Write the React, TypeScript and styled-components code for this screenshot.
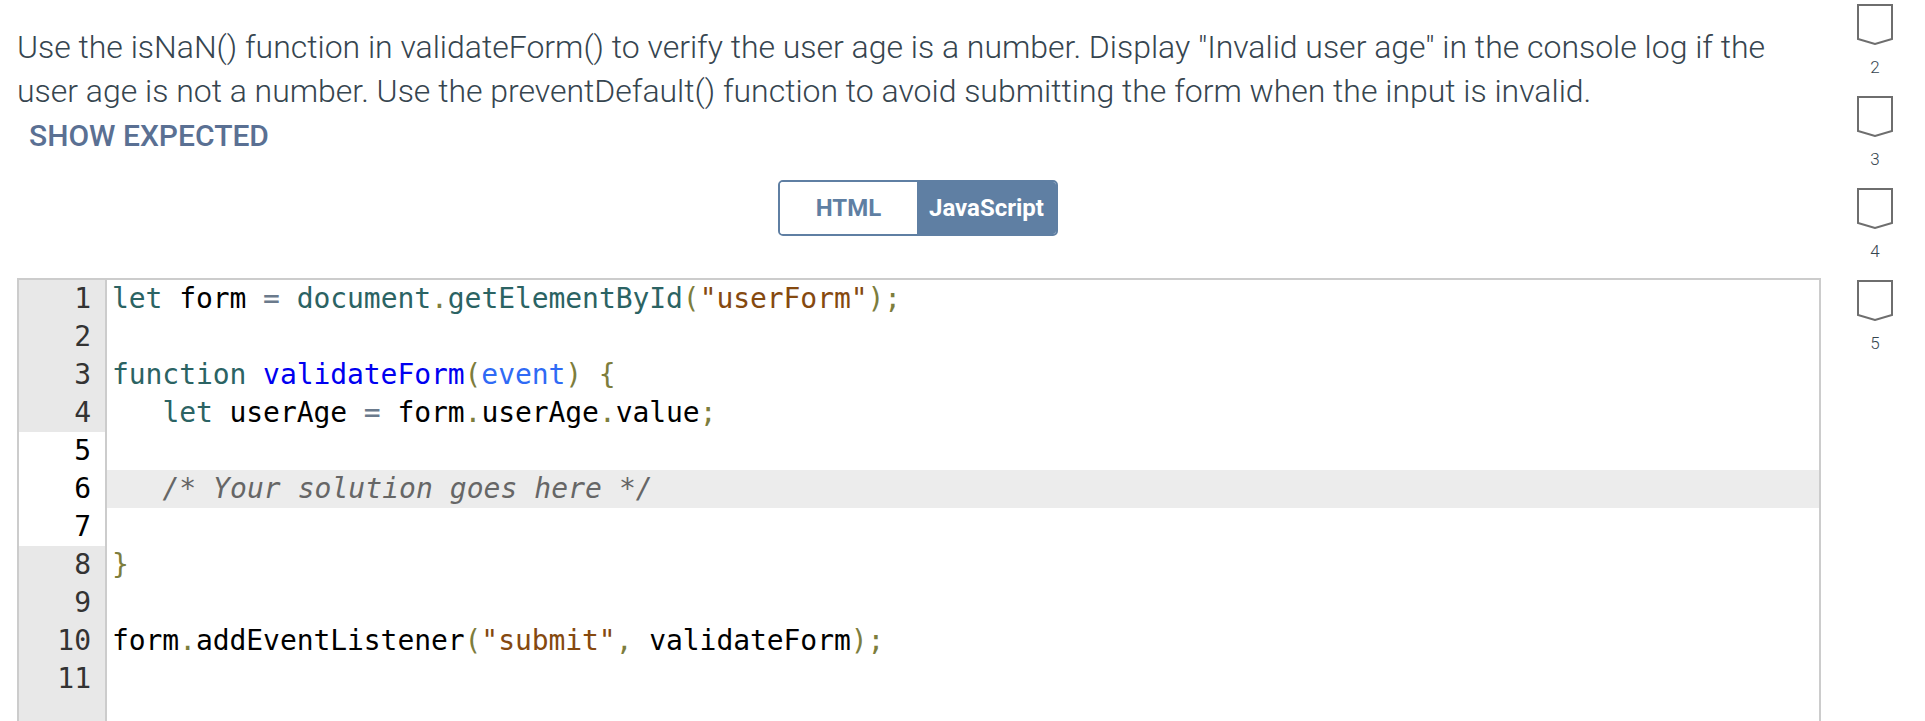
import React from "react";
import styled, { createGlobalStyle } from "styled-components";

type Kind = "plain" | "keyword" | "support" | "fn" | "param" | "string" | "paren" | "op" | "dot" | "comment";
type Token = [Kind, string];

const code: Token[][] = [
  [["keyword", "let"], ["plain", " form "], ["op", "="], ["plain", " "], ["support", "document"], ["dot", "."], ["support", "getElementById"], ["paren", "("], ["string", "\"userForm\""], ["paren", ")"], ["dot", ";"]],
  [],
  [["keyword", "function"], ["plain", " "], ["fn", "validateForm"], ["paren", "("], ["param", "event"], ["paren", ") {"]],
  [["plain", "   "], ["keyword", "let"], ["plain", " userAge "], ["op", "="], ["plain", " form"], ["dot", "."], ["plain", "userAge"], ["dot", "."], ["plain", "value"], ["dot", ";"]],
  [],
  [["plain", "   "], ["comment", "/* Your solution goes here */"]],
  [],
  [["paren", "}"]],
  [],
  [["plain", "form"], ["dot", "."], ["plain", "addEventListener"], ["paren", "("], ["string", "\"submit\""], ["dot", ","], ["plain", " validateForm"], ["paren", ")"], ["dot", ";"]],
  [],
];

const tokenColors: Record<Kind, string> = {
  plain: "#000000",
  keyword: "#2b6363",
  support: "#2b6363",
  fn: "#0000f0",
  param: "#2f6af5",
  string: "#85490f",
  paren: "#7d7d3c",
  op: "#6b7a8c",
  dot: "#7d7d3c",
  comment: "#666666",
};

const readOnlyLines = [1, 2, 3, 4, 8, 9, 10, 11];

const GlobalStyle = createGlobalStyle`
  html, body {
    margin: 0;
    height: 100%;
    background: #ffffff;
    overflow: hidden;
  }
`;

const Page = styled.div`
  display: flex;
  width: 1925px;
  height: 721px;
  overflow: hidden;
  font-family: Roboto, "Liberation Sans", sans-serif;
`;

const Main = styled.main`
  width: 1821px;
  padding: 25px 0 0 17px;
  box-sizing: border-box;
`;

const Prompt = styled.p`
  margin: 0;
  font-size: 32px;
  font-weight: 300;
  line-height: 44px;
  color: #36454f;
  letter-spacing: -0.02px;
`;

const ShowExpected = styled.button`
  display: block;
  margin: 0 0 0 12px;
  padding: 0;
  border: 0;
  background: none;
  font-family: inherit;
  font-size: 30px;
  font-weight: 500;
  line-height: 45px;
  letter-spacing: 0;
  color: #5a7093;
`;

const ToggleRow = styled.div`
  display: flex;
  justify-content: center;
  margin-top: 22px;
  padding-right: 2px;
`;

const Toggle = styled.div`
  display: flex;
  width: 280px;
  height: 56px;
  box-sizing: border-box;
  border: 2px solid #5f7fa3;
  border-radius: 5px;
  overflow: hidden;
`;

const ToggleOption = styled.div<{ $active?: boolean }>`
  display: flex;
  align-items: center;
  justify-content: center;
  width: ${(p) => (p.$active ? "140px" : "138px")};
  font-size: 24px;
  font-weight: 700;
  letter-spacing: 0;
  background: ${(p) => (p.$active ? "#5f7fa3" : "#ffffff")};
  color: ${(p) => (p.$active ? "#ffffff" : "#5f7fa3")};
`;

const Editor = styled.div`
  display: flex;
  margin-top: 42px;
  height: 460px;
  box-sizing: border-box;
  border: 2px solid #cccccc;
  font-family: "DejaVu Sans Mono", monospace;
  font-size: 28px;
`;

const Gutter = styled.div`
  flex: none;
  width: 88px;
  box-sizing: border-box;
  border-right: 2px solid #cccccc;
  background: #e8e8e8;
`;

const GutterCell = styled.div<{ $readOnly: boolean }>`
  height: 38px;
  padding-right: 14px;
  line-height: 38px;
  text-align: right;
  color: ${(p) => (p.$readOnly ? "#333333" : "#000000")};
  background: ${(p) => (p.$readOnly ? "#e8e8e8" : "#ffffff")};
`;

const Lines = styled.div`
  flex: 1;
  min-width: 0;
`;

const Line = styled.div<{ $active: boolean }>`
  height: 38px;
  padding-left: 5px;
  line-height: 38px;
  letter-spacing: -0.07px;
  white-space: pre;
  background: ${(p) => (p.$active ? "#ececec" : "transparent")};
`;

const Tok = styled.span<{ $kind: Kind }>`
  color: ${(p) => tokenColors[p.$kind]};
  font-style: ${(p) => (p.$kind === "comment" ? "italic" : "normal")};
  letter-spacing: ${(p) => (p.$kind === "comment" ? "0.05px" : "inherit")};
`;

const Rail = styled.aside`
  flex: none;
  display: flex;
  flex-direction: column;
  align-items: center;
  width: 36px;
  margin-left: 36px;
  padding-top: 4px;
`;

const RailItem = styled.div`
  display: flex;
  flex-direction: column;
  align-items: center;
  height: 92px;
`;

const RailLabel = styled.span`
  margin-top: 12px;
  font-size: 17px;
  font-weight: 300;
  line-height: 20px;
  color: #36454f;
`;

function Flag() {
  return (
    <svg width="36" height="41" viewBox="0 0 36 41" fill="none" aria-hidden="true">
      <path d="M1 1H35V35L18 40L1 35Z" stroke="#6e6e6e" strokeWidth="2" />
    </svg>
  );
}

export default function App() {
  return (
    <Page>
      <GlobalStyle />
      <Main>
        <Prompt>
          Use the isNaN() function in validateForm() to verify the user age is a number. Display "Invalid user age" in the console log if the
          <br />
          user age is not a number. Use the preventDefault() function to avoid submitting the form when the input is invalid.
        </Prompt>
        <ShowExpected>SHOW EXPECTED</ShowExpected>
        <ToggleRow>
          <Toggle>
            <ToggleOption>HTML</ToggleOption>
            <ToggleOption $active>JavaScript</ToggleOption>
          </Toggle>
        </ToggleRow>
        <Editor>
          <Gutter>
            {code.map((_, i) => (
              <GutterCell key={i} $readOnly={readOnlyLines.includes(i + 1)}>
                {i + 1}
              </GutterCell>
            ))}
          </Gutter>
          <Lines>
            {code.map((tokens, i) => (
              <Line key={i} $active={i === 5}>
                {tokens.map(([kind, text], j) => (
                  <Tok key={j} $kind={kind}>
                    {text}
                  </Tok>
                ))}
              </Line>
            ))}
          </Lines>
        </Editor>
      </Main>
      <Rail>
        {[2, 3, 4, 5].map((n) => (
          <RailItem key={n}>
            <Flag />
            <RailLabel>{n}</RailLabel>
          </RailItem>
        ))}
      </Rail>
    </Page>
  );
}
